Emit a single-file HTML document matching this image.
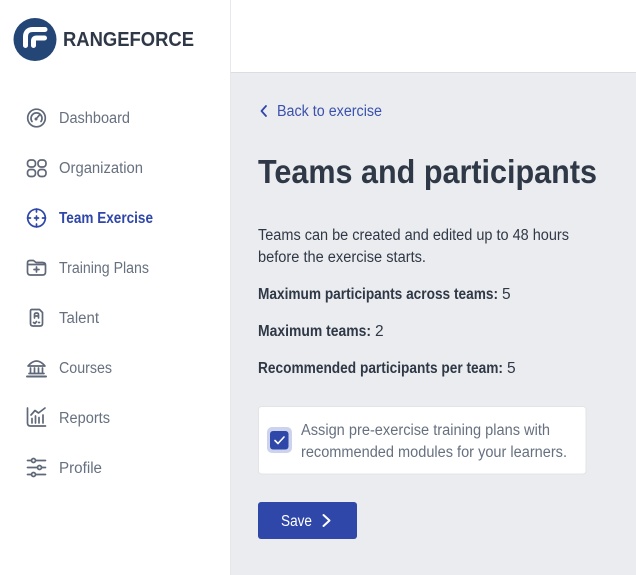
<!DOCTYPE html>
<html><head><meta charset="utf-8"><style>
html,body{margin:0;padding:0;width:636px;height:575px;overflow:hidden;background:#fff}
svg{display:block}
text{font-family:"Liberation Sans",sans-serif}
.n{font-size:15.5px;fill:#66707f}
.b{font-size:15.5px;fill:#2f3846}
.bb{font-size:15.5px;fill:#2f3846;font-weight:700}
.g{font-size:15.5px;fill:#66707f}
.i{fill:none;stroke:#5f6878;stroke-width:1.7;stroke-linecap:round;stroke-linejoin:round}
</style></head><body>
<svg width="636" height="575" viewBox="0 0 636 575" xmlns="http://www.w3.org/2000/svg">
<rect width="636" height="575" fill="#fff"/>
<rect x="231" y="73" width="405" height="502" fill="#ebecef"/>
<rect x="230" y="0" width="1" height="575" fill="#e6e7ea"/>
<rect x="231" y="72" width="405" height="1" fill="#dcdde1"/>

<circle cx="35" cy="39.500" r="21.500" fill="#244677"/>
<path d="M25.500 45.500V37Q25.500 29.500 33 29.500H45" fill="none" stroke="#fff" stroke-width="5" stroke-linecap="round"/>
<path d="M33.500 45.500V41Q33.500 38 36.500 38H44.500" fill="none" stroke="#fff" stroke-width="5" stroke-linecap="round" stroke-linejoin="round"/>
<text x="63" y="46" font-size="20" font-weight="700" fill="#2f3846" textLength="131" lengthAdjust="spacingAndGlyphs">RANGEFORCE</text>

<!-- Dashboard -->
<circle class="i" cx="36.500" cy="118" r="8.800"/>
<path class="i" d="M32 121.500A5.500 5.500 0 1 1 41 121.500"/>
<circle cx="36" cy="119" r="1.500" fill="#5f6878"/>
<path class="i" d="M36 119L39.500 115"/>
<text class="n" x="59" y="123" textLength="71" lengthAdjust="spacingAndGlyphs">Dashboard</text>

<!-- Organization -->
<rect class="i" x="27.500" y="160" width="8" height="7" rx="3"/>
<rect class="i" x="38" y="160" width="8" height="7" rx="3"/>
<rect class="i" x="27.500" y="169.500" width="8" height="7" rx="3"/>
<rect class="i" x="38" y="169.500" width="8" height="7" rx="3"/>
<text class="n" x="59" y="173" textLength="84" lengthAdjust="spacingAndGlyphs">Organization</text>

<!-- Team Exercise -->
<circle class="i" style="stroke:#2f47a8" cx="36.500" cy="218" r="8.800"/>
<path class="i" style="stroke:#2f47a8" d="M36.500 209V212M36.500 224V227M27.500 218H30.500M42.500 218H45.500M34.500 218H38.500M36.500 216V220"/>
<text x="59" y="223" font-size="15.500" font-weight="700" fill="#2f47a8" textLength="94" lengthAdjust="spacingAndGlyphs">Team Exercise</text>

<!-- Training Plans -->
<path class="i" d="M27.500 263V272Q27.500 275 30.500 275H42.500Q45.500 275 45.500 272V265Q45.500 262.500 42.500 262.500H36L33.500 260.500H30Q27.500 260.500 27.500 263ZM27.500 264.500H45"/>
<path class="i" d="M36.500 267V272M34 269.500H39"/>
<text class="n" x="59" y="273" textLength="90" lengthAdjust="spacingAndGlyphs">Training Plans</text>

<!-- Talent -->
<path class="i" d="M32 309.500H39.500L42.500 312.500V323.500Q42.500 326 40 326H33Q30.500 326 30.500 323.500V311Q30.500 309.500 32 309.500Z"/>
<path class="i" stroke-width="1.200" d="M34.500 318V314.500Q34.500 313 36.500 313Q38.500 313 38.500 314.500V318M34.500 316H38.500M33.500 322.500L35 323.500L36.500 321.500M38.500 322.500H39.500"/>
<text class="n" x="59" y="323" textLength="40" lengthAdjust="spacingAndGlyphs">Talent</text>

<!-- Courses -->
<path class="i" d="M28 366Q36.500 356 45 366ZM30.500 368V373M34.500 368V373M38.500 368V373M42.500 368V373M29 373.500H44"/>
<path d="M27 376.500H46" fill="none" stroke="#5f6878" stroke-width="2" stroke-linecap="round"/>
<text class="n" x="59" y="373" textLength="53" lengthAdjust="spacingAndGlyphs">Courses</text>

<!-- Reports -->
<path class="i" d="M27.500 408V423Q27.500 426 30.500 426H45.500"/>
<path class="i" d="M31 415L35 410.500L38.500 413L45 408M32 418.500V423M35.500 416V423M39 417.500V423M43 415V423"/>
<text class="n" x="59" y="423" textLength="51" lengthAdjust="spacingAndGlyphs">Reports</text>

<!-- Profile -->
<path class="i" d="M27.500 460.500H31.500M36 460.500H45.500M27.500 467.500H37.500M42 467.500H45.500M27.500 474.500H31.500M36 474.500H45.500"/>
<circle class="i" cx="33.500" cy="460.500" r="2"/>
<circle class="i" cx="39.500" cy="467.500" r="2"/>
<circle class="i" cx="33.500" cy="474.500" r="2"/>
<text class="n" x="59" y="473" textLength="43" lengthAdjust="spacingAndGlyphs">Profile</text>

<!-- Main -->
<path d="M266 106L261.500 111L266 116" fill="none" stroke="#2f47a8" stroke-width="1.800" stroke-linecap="round" stroke-linejoin="round"/>
<text x="277" y="116" font-size="15.500" fill="#3a51ad" textLength="105" lengthAdjust="spacingAndGlyphs">Back to exercise</text>

<text x="258" y="183" font-size="33" font-weight="700" fill="#2f3846" textLength="339" lengthAdjust="spacingAndGlyphs">Teams and participants</text>

<text class="b" x="258" y="240" textLength="311" lengthAdjust="spacingAndGlyphs">Teams can be created and edited up to 48 hours</text>
<text class="b" x="258" y="262" textLength="168" lengthAdjust="spacingAndGlyphs">before the exercise starts.</text>

<text class="bb" x="258" y="299" textLength="240" lengthAdjust="spacingAndGlyphs">Maximum participants across teams:</text>
<text class="b" x="502" y="299">5</text>
<text class="bb" x="258" y="336" textLength="113" lengthAdjust="spacingAndGlyphs">Maximum teams:</text>
<text class="b" x="375" y="336">2</text>
<text class="bb" x="258" y="373" textLength="245" lengthAdjust="spacingAndGlyphs">Recommended participants per team:</text>
<text class="b" x="507" y="373">5</text>

<rect x="258.500" y="406.500" width="327.500" height="67.500" rx="3" fill="#fff" stroke="#e3e4e8"/>
<rect x="267" y="427" width="25" height="26" rx="5" fill="#cdd3ec"/>
<rect x="270" y="431" width="18.500" height="18.500" rx="3" fill="#2f47a8"/>
<path d="M275 440.500L278 443.500L284 437" fill="none" stroke="#fff" stroke-width="1.600" stroke-linecap="round" stroke-linejoin="round"/>
<text class="g" x="301" y="435" textLength="249" lengthAdjust="spacingAndGlyphs">Assign pre-exercise training plans with</text>
<text class="g" x="301" y="457" textLength="266" lengthAdjust="spacingAndGlyphs">recommended modules for your learners.</text>

<rect x="258" y="502" width="99" height="37" rx="3" fill="#2f47a8"/>
<text x="281" y="526" font-size="15.500" fill="#fff" textLength="31" lengthAdjust="spacingAndGlyphs">Save</text>
<path d="M323.500 515L329.500 520.500L323.500 526" fill="none" stroke="#fff" stroke-width="2" stroke-linecap="round" stroke-linejoin="round"/>
</svg>
</body></html>
